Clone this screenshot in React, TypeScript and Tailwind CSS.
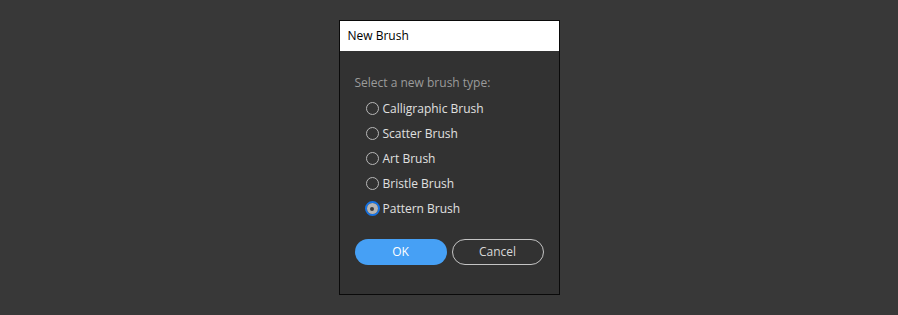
import React, { useState } from "react";

const brushTypes = ["Calligraphic Brush", "Scatter Brush", "Art Brush", "Bristle Brush", "Pattern Brush"];

function Radio({ checked }: { checked: boolean }) {
  if (checked) {
    return (
      <span className="flex h-[15px] w-[15px] items-center justify-center rounded-full border-2 border-[#1473e6]">
        <span className="flex h-[11px] w-[11px] items-center justify-center rounded-full bg-[#b4b4b4]">
          <span className="h-[4px] w-[4px] rounded-full bg-[#3a3a3a]" />
        </span>
      </span>
    );
  }
  return (
    <span className="flex h-[15px] w-[15px] items-center justify-center">
      <span className="h-[13px] w-[13px] rounded-full border border-[#b8b8b8]" />
    </span>
  );
}

export default function App() {
  const [selected, setSelected] = useState("Pattern Brush");

  return (
    <div className="flex h-[315px] w-[898px] justify-center bg-[#383838] pt-[20px] font-['Open_Sans','Noto_Sans',sans-serif]">
      <div className="flex h-[275px] w-[221px] flex-col border border-[#0a0a0a] bg-[#323232]">
        <div className="flex h-[30px] items-center bg-white pl-[8px] text-[12px] text-black">New Brush</div>

        <div className="flex flex-col px-[15px] pt-[24px]">
          <p className="text-[12px] leading-[16px] text-[#9b9b9b]">Select a new brush type:</p>
          <div className="mt-[9px] flex flex-col gap-[8px] pl-[10px]">
            {brushTypes.map(name => (
              <button
                key={name}
                onClick={() => setSelected(name)}
                className="flex h-[17px] items-center gap-[3px] text-left text-[12px] text-[#e0e0e0]"
              >
                <Radio checked={selected === name} />
                <span>{name}</span>
              </button>
            ))}
          </div>

          <div className="mt-[22px] flex gap-[5px]">
            <button className="flex h-[26px] w-[92px] items-center justify-center rounded-full bg-[#46a0f5] text-[12px] text-white">
              OK
            </button>
            <button className="flex h-[26px] w-[92px] items-center justify-center rounded-full border-[1.5px] border-[#c4c4c4] text-[12px] text-[#d8d8d8]">
              Cancel
            </button>
          </div>
        </div>
      </div>
    </div>
  );
}
